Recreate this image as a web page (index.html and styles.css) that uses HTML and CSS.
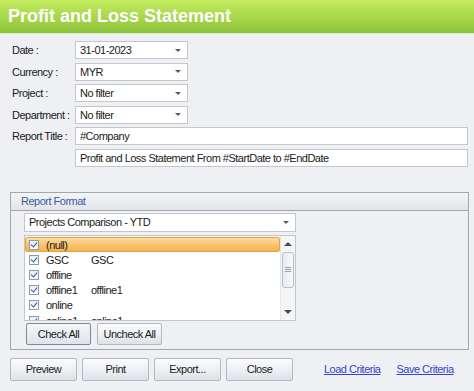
FILE: index.html
```html
<!DOCTYPE html>
<html lang="en">
<head>
  <meta charset="UTF-8">
  <title>Profit and Loss Statement</title>
  <link rel="stylesheet" href="styles.css">
</head>
<body>

  <header class="title-bar">Profit and Loss Statement</header>

  <main class="criteria">

    <!-- filter fields -->
    <div class="fields">
      <div class="row">
        <label>Date :</label>
        <div class="combo short"><span>31-01-2023</span><i class="arrow"></i></div>
      </div>
      <div class="row">
        <label>Currency :</label>
        <div class="combo short"><span>MYR</span><i class="arrow"></i></div>
      </div>
      <div class="row">
        <label>Project :</label>
        <div class="combo short"><span>No filter</span><i class="arrow"></i></div>
      </div>
      <div class="row">
        <label>Department :</label>
        <div class="combo short"><span>No filter</span><i class="arrow"></i></div>
      </div>
      <div class="row">
        <label>Report Title :</label>
        <div class="textbox">#Company</div>
      </div>
      <div class="row">
        <label></label>
        <div class="textbox">Profit and Loss Statement From #StartDate to #EndDate</div>
      </div>
    </div>

    <!-- report format group -->
    <section class="group">
      <div class="group-head">Report Format</div>
      <div class="group-body">
        <div class="combo wide"><span>Projects Comparison - YTD</span><i class="arrow"></i></div>

        <div class="list">
          <ul class="list-items">
            <li class="selected"><span class="check"></span><span class="code">(null)</span></li>
            <li><span class="check"></span><span class="code">GSC</span><span class="desc">GSC</span></li>
            <li><span class="check"></span><span class="code">offline</span></li>
            <li><span class="check"></span><span class="code">offline1</span><span class="desc">offline1</span></li>
            <li><span class="check"></span><span class="code">online</span></li>
            <li><span class="check"></span><span class="code">online1</span><span class="desc">online1</span></li>
          </ul>
          <div class="scrollbar">
            <i class="scroll-up"></i>
            <div class="thumb"><b></b><b></b><b></b></div>
            <i class="scroll-down"></i>
          </div>
        </div>

        <div class="check-buttons">
          <button class="btn small focused">Check All</button>
          <button class="btn small">Uncheck All</button>
        </div>
      </div>
    </section>

    <!-- actions -->
    <div class="actions">
      <button class="btn">Preview</button>
      <button class="btn">Print</button>
      <button class="btn">Export...</button>
      <button class="btn">Close</button>
      <a href="#" class="link first">Load Criteria</a>
      <a href="#" class="link">Save Criteria</a>
    </div>

  </main>

</body>
</html>
```

FILE: styles.css
```css
body {
  margin: 0;
  width: 474px;
  height: 391px;
  overflow: hidden;
  background-color: #eef0f3;
  font-family: "Liberation Sans", Arial, sans-serif;
  font-size: 11px;
  letter-spacing: -0.5px;
  color: #1b1b1b;
}

.title-bar {
  height: 33px;
  line-height: 33px;
  padding-left: 8px;
  background: linear-gradient(#c4ec5f, #a6d64a 55%, #8cc33c);
  border-bottom: 1px solid #dde7cc;
  color: #ffffff;
  font-size: 18px;
  font-weight: bold;
  letter-spacing: 0;
}

.criteria {
  padding: 7px 0 0 10px;
}

.fields {
  display: flex;
  flex-direction: column;
  gap: 3.6px;
  padding-left: 2px;
}

.row {
  display: flex;
  align-items: center;
  height: 18px;
}

.row label {
  width: 63px;
  flex: none;
}

.combo,
.textbox {
  box-sizing: border-box;
  height: 18px;
  display: flex;
  align-items: center;
  padding: 0 4px;
  background-color: #ffffff;
  border: 1px solid #c3c7cc;
}

.combo span {
  flex: 1;
}

.combo.short {
  width: 113px;
}

.textbox {
  width: 393px;
}

.arrow {
  width: 0;
  height: 0;
  margin-right: 2px;
  border-left: 3px solid transparent;
  border-right: 3px solid transparent;
  border-top: 3px solid #5a5a5a;
}

/* group box */

.group {
  box-sizing: border-box;
  width: 459px;
  margin-top: 25px;
  border: 1px solid #a3a6aa;
}

.group-head {
  box-sizing: border-box;
  height: 18px;
  line-height: 17px;
  padding-left: 10px;
  background: linear-gradient(#f3f4f6, #e1e4e8);
  border-bottom: 1px solid #a3a6aa;
  color: #3b5c9e;
}

.group-body {
  padding: 2px 0 4px 13px;
}

.combo.wide {
  width: 272px;
  height: 19px;
}

.list {
  box-sizing: border-box;
  width: 272px;
  height: 86px;
  margin-top: 3px;
  display: flex;
  background-color: #ffffff;
  border: 1px solid #c3c7cc;
  overflow: hidden;
}

.list-items {
  flex: 1;
  list-style: none;
  margin: 0;
  padding: 1px 0 0 0;
}

.list-items li {
  height: 15.2px;
  display: flex;
  align-items: center;
  padding-left: 3px;
  border: 1px solid transparent;
  border-right: none;
  box-sizing: border-box;
}

.list-items li.selected {
  background: linear-gradient(#fcdca3, #f8c06a 60%, #f5b452);
  border-color: #e6a443;
  border-right: 1px solid #e6a443;
  border-radius: 2px;
}

.check {
  box-sizing: border-box;
  width: 10px;
  height: 10px;
  margin-right: 7px;
  border: 1px solid #8a9cb2;
  background: linear-gradient(#e9eef5, #ffffff);
  position: relative;
}

.check::after {
  content: "";
  position: absolute;
  left: 2px;
  top: 0px;
  width: 3px;
  height: 5px;
  border-right: 1.5px solid #3656a0;
  border-bottom: 1.5px solid #3656a0;
  transform: rotate(40deg);
}

.code {
  width: 45px;
}

.scrollbar {
  width: 14px;
  flex: none;
  display: flex;
  flex-direction: column;
  align-items: center;
  background-color: #f4f5f7;
  border-left: 1px solid #e4e6e9;
}

.scroll-up,
.scroll-down {
  width: 0;
  height: 0;
  border-left: 4px solid transparent;
  border-right: 4px solid transparent;
}

.scroll-up {
  margin-top: 6px;
  border-bottom: 4px solid #4c4c4c;
}

.scroll-down {
  margin-top: auto;
  margin-bottom: 6px;
  border-top: 4px solid #4c4c4c;
}

.thumb {
  box-sizing: border-box;
  width: 12px;
  height: 36px;
  margin-top: 6px;
  display: flex;
  flex-direction: column;
  align-items: center;
  justify-content: center;
  gap: 1px;
  background: linear-gradient(90deg, #e7eaee, #f8f9fa);
  border: 1px solid #b8bec6;
  border-radius: 3px;
}

.thumb b {
  width: 6px;
  height: 1px;
  background-color: #9aa1aa;
}

/* buttons */

.btn {
  box-sizing: border-box;
  width: 67px;
  height: 23px;
  padding: 0;
  font-family: inherit;
  font-size: 11px;
  letter-spacing: -0.5px;
  color: #1b1b1b;
  background: linear-gradient(#fbfbfc, #f0f2f4 45%, #dde2e8);
  border: 1px solid #b2b8c0;
  border-radius: 2px;
}

.btn.small {
  width: 65px;
  height: 22px;
}

.btn.focused {
  border-color: #7e8792;
  background: linear-gradient(#f4f6f8, #dfe4ea);
}

.check-buttons {
  display: flex;
  gap: 6px;
  margin: 2px 0 0 2px;
}

.actions {
  display: flex;
  align-items: center;
  gap: 5px;
  margin-top: 8px;
}

.link {
  color: #3344cc;
  text-decoration: underline;
}

.link.first {
  margin-left: 26px;
}

.link + .link {
  margin-left: 11px;
}
```
